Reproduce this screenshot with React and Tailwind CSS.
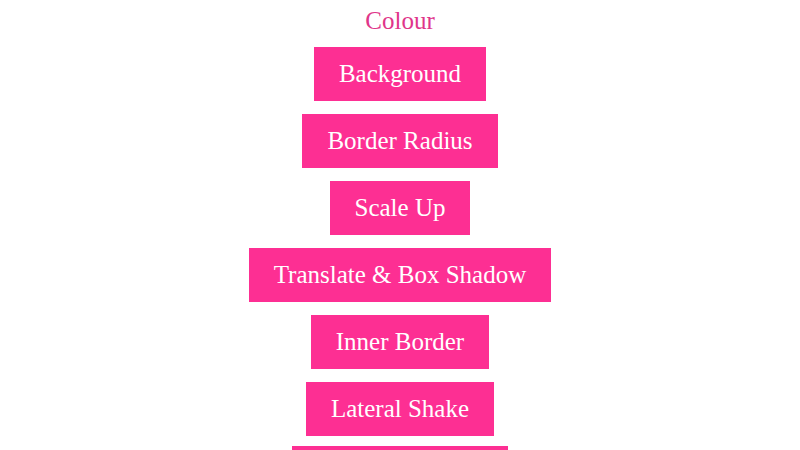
import React from "react";

const effects = [
  "Background",
  "Border Radius",
  "Scale Up",
  "Translate & Box Shadow",
  "Inner Border",
  "Lateral Shake",
];

export default function App() {
  return (
    <div className="min-h-screen bg-white flex flex-col items-center font-['Liberation_Serif',serif]">
      <h2 className="mt-[7px] mb-[13px] text-[25px] leading-[27px] text-[#e0358a]">Colour</h2>
      <div className="flex flex-col items-center gap-[13px]">
        {effects.map((name) => (
          <button
            key={name}
            className="h-[54px] px-[25px] pb-[2px] bg-[#fd2f93] text-white text-[25px] leading-none cursor-pointer"
          >
            {name}
          </button>
        ))}
        {/* next group starts a little tighter */}
        <button className="-mt-[3px] h-[54px] px-[26px] pb-[2px] bg-[#fd2f93] text-white text-[25px] leading-none cursor-pointer">
          Gradient Border
        </button>
      </div>
    </div>
  );
}
